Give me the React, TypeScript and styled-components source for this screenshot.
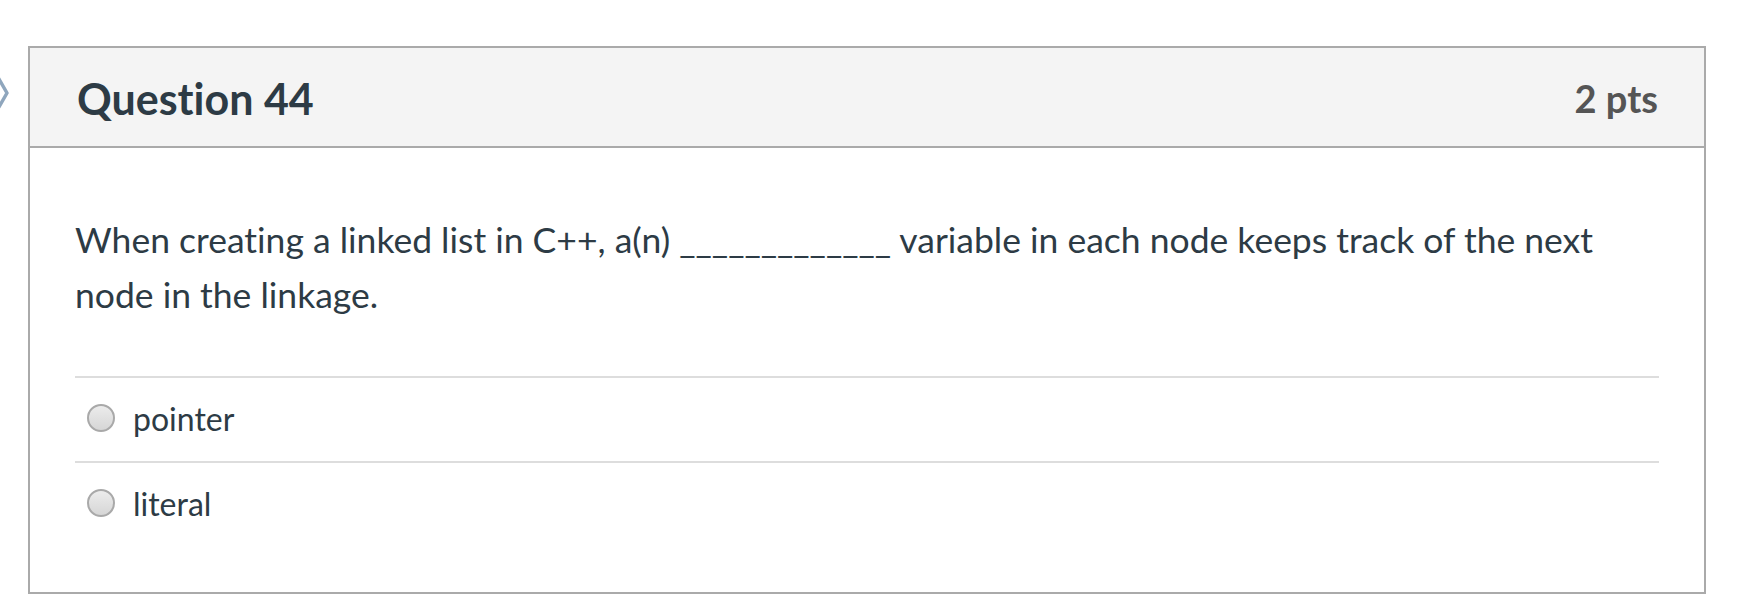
import styled, { createGlobalStyle } from "styled-components";

const GlobalStyle = createGlobalStyle`
  html, body {
    margin: 0;
    padding: 0;
    background: #ffffff;
  }
  body {
    font-family: Lato, "Liberation Sans", sans-serif;
    font-variant-ligatures: none;
    color: #2d3b45;
  }
`;

const Page = styled.div`
  display: flex;
  align-items: flex-start;
  padding-top: 46px;
  width: 1748px;
  height: 600px;
  box-sizing: border-box;
  overflow: hidden;
`;

const Gutter = styled.div`
  width: 28px;
  flex-shrink: 0;
  overflow: hidden;
  padding-top: 31px;

  svg {
    display: block;
    margin-left: -13px;
  }
`;

const QuestionCard = styled.div`
  width: 1678px;
  box-sizing: border-box;
  border: 2px solid #aaaaaa;
  background: #ffffff;
`;

const Header = styled.div`
  display: flex;
  align-items: center;
  justify-content: space-between;
  height: 100px;
  box-sizing: border-box;
  padding: 2px 46px 0 47px;
  background: #f4f4f4;
  border-bottom: 2px solid #aaaaaa;
`;

const Title = styled.h2`
  margin: 0;
  font-size: 43px;
  font-weight: 700;
  color: #2d3b45;
`;

const Points = styled.span`
  font-size: 38px;
  font-weight: 700;
  color: #555555;
`;

const Body = styled.div`
  padding: 64px 45px 46px;
`;

const QuestionText = styled.p`
  margin: 0 0 54px;
  font-size: 35.5px;
  line-height: 55px;
  color: #2d3b45;
`;

const Answers = styled.div`
  display: flex;
  flex-direction: column;
`;

const AnswerRow = styled.label`
  display: flex;
  align-items: center;
  gap: 18px;
  height: 85px;
  box-sizing: border-box;
  padding: 0 0 3px 12px;
  border-top: 2px solid #dddddd;
  font-size: 32px;
  color: #2d3b45;
`;

const Radio = styled.span`
  width: 28px;
  height: 28px;
  border-radius: 50%;
  box-sizing: border-box;
  border: 2px solid #a9a9a9;
  background: linear-gradient(#ececec, #d6d6d6);
  flex-shrink: 0;
`;

const answers = ["pointer", "literal"];

const App = () => {
  return (
    <>
      <GlobalStyle />
      <Page>
        <Gutter>
          <svg width="24" height="32" viewBox="0 0 24 32">
            <path
              d="M2 2 H12 L20 16 L12 30 H2 Z"
              fill="none"
              stroke="#8fa6bd"
              strokeWidth="3.5"
              strokeLinejoin="round"
            />
          </svg>
        </Gutter>
        <QuestionCard>
          <Header>
            <Title>Question 44</Title>
            <Points>2 pts</Points>
          </Header>
          <Body>
            <QuestionText>
              When creating a linked list in C++, a(n) _____________ variable in each node keeps track of the next node in the linkage.
            </QuestionText>
            <Answers>
              {answers.map((answer) => (
                <AnswerRow key={answer}>
                  <Radio />
                  {answer}
                </AnswerRow>
              ))}
            </Answers>
          </Body>
        </QuestionCard>
      </Page>
    </>
  );
};

export default App;
